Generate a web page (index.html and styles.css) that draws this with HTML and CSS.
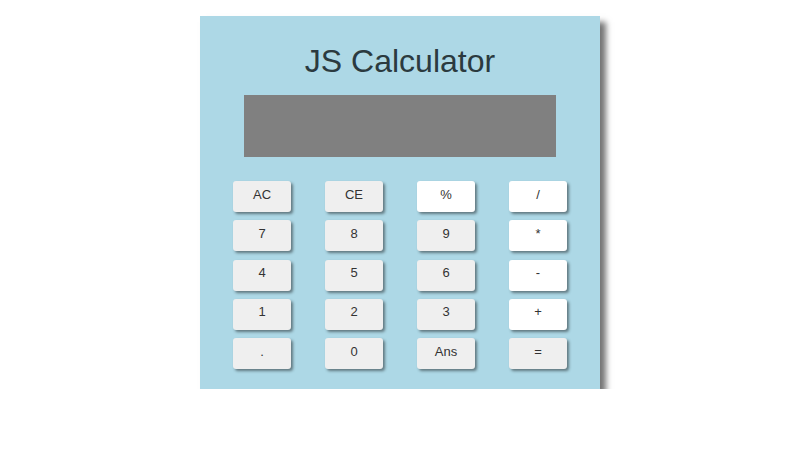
FILE: index.html
```html
<!DOCTYPE html>
<html lang="en">
  <head>
    <meta charset="UTF-8" />
    <meta name="viewport" content="width=device-width, initial-scale=1.0" />
    <link rel="stylesheet" href="styles.css">
    <title>JS Calculator</title>
  </head>
  <body>
    <div class="calculator">
      <h1 class="title">JS Calculator</h1>
      <div class="screen" id="screen"></div>
      <div class="keys">
        <button class="key">AC</button>
        <button class="key">CE</button>
        <button class="key op">%</button>
        <button class="key op">/</button>
        <button class="key">7</button>
        <button class="key">8</button>
        <button class="key">9</button>
        <button class="key op">*</button>
        <button class="key">4</button>
        <button class="key">5</button>
        <button class="key">6</button>
        <button class="key op">-</button>
        <button class="key">1</button>
        <button class="key">2</button>
        <button class="key">3</button>
        <button class="key op">+</button>
        <button class="key">.</button>
        <button class="key">0</button>
        <button class="key">Ans</button>
        <button class="key">=</button>
      </div>
    </div>
  </body>
</html>
```

FILE: styles.css
```css
* {
  margin: 0;
  padding: 0;
  box-sizing: border-box;
}

body {
  background-color: #fff;
  font-family: "Liberation Sans", Arial, sans-serif;
}

.calculator {
  width: 400px;
  margin: 16px auto 0;
  padding: 27px 0 20px;
  background-color: lightblue;
  box-shadow: 6px 6px 6px rgba(0, 0, 0, 0.55);
}

.title {
  font-size: 32px;
  font-weight: normal;
  line-height: 37px;
  color: #2b3a3f;
  text-align: center;
}

.screen {
  width: 312px;
  height: 62px;
  margin: 15px auto 0;
  background-color: grey;
}

.keys {
  display: grid;
  grid-template-columns: repeat(4, 58px);
  column-gap: 34px;
  row-gap: 8.25px;
  justify-content: center;
  margin-top: 24px;
}

.key {
  height: 31px;
  padding-bottom: 5px;
  border: none;
  border-radius: 3px;
  background-color: #efefef;
  box-shadow: 2px 2px 3px rgba(0, 0, 0, 0.45);
  font-family: "Liberation Sans", Arial, sans-serif;
  font-size: 13px;
  color: #333;
  cursor: pointer;
}

.key.op {
  background-color: #fff;
}
```
